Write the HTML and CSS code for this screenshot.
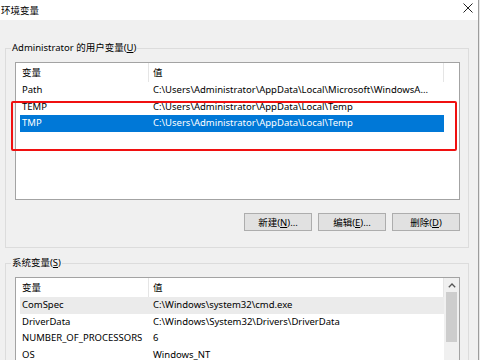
FILE: index.html
```html
<!DOCTYPE html>
<html lang="zh-CN">
    <head>
        <meta charset="UTF-8" />
        <title>环境变量</title>
        <link rel="stylesheet" href="styles.css">
    </head>
    <body>
        <div class="window">
            <header class="titlebar">
                <span class="title">环境变量</span>
                <svg class="close" width="10" height="10" viewBox="0 0 10 10">
                    <path d="M0.5 0.5 L9.5 9.5 M9.5 0.5 L0.5 9.5" stroke="#222" stroke-width="1" fill="none" />
                </svg>
            </header>

            <main class="dialog">
                <fieldset class="group">
                    <legend>Administrator 的用户变量(<u>U</u>)</legend>
                    <div class="list list-user">
                        <div class="list-main">
                            <div class="list-head">
                                <span>变量</span>
                                <span>值</span>
                            </div>
                            <div class="row">
                                <span>Path</span>
                                <span>C:\Users\Administrator\AppData\Local\Microsoft\WindowsA...</span>
                            </div>
                            <div class="row">
                                <span>TEMP</span>
                                <span>C:\Users\Administrator\AppData\Local\Temp</span>
                            </div>
                            <div class="row selected">
                                <span>TMP</span>
                                <span>C:\Users\Administrator\AppData\Local\Temp</span>
                            </div>
                        </div>
                    </div>
                    <div class="buttons">
                        <button>新建(<u>N</u>)...</button>
                        <button>编辑(<u>E</u>)...</button>
                        <button>删除(<u>D</u>)</button>
                    </div>
                </fieldset>

                <fieldset class="group">
                    <legend>系统变量(<u>S</u>)</legend>
                    <div class="list list-sys">
                        <div class="list-main">
                            <div class="list-head">
                                <span>变量</span>
                                <span>值</span>
                            </div>
                            <div class="row hover">
                                <span>ComSpec</span>
                                <span>C:\Windows\system32\cmd.exe</span>
                            </div>
                            <div class="row">
                                <span>DriverData</span>
                                <span>C:\Windows\System32\Drivers\DriverData</span>
                            </div>
                            <div class="row">
                                <span>NUMBER_OF_PROCESSORS</span>
                                <span>6</span>
                            </div>
                            <div class="row">
                                <span>OS</span>
                                <span>Windows_NT</span>
                            </div>
                        </div>
                        <div class="scrollbar">
                            <div class="scroll-up">
                                <svg width="8" height="5" viewBox="0 0 8 5">
                                    <path d="M0.8 4.2 L4 1 L7.2 4.2" stroke="#555" stroke-width="1.3" fill="none" />
                                </svg>
                            </div>
                            <div class="scroll-thumb"></div>
                        </div>
                    </div>
                </fieldset>
            </main>

            <!-- annotation box drawn over the list -->
            <div class="mark"></div>
        </div>
    </body>
</html>
```

FILE: styles.css
```css
* {
  box-sizing: border-box;
}
body {
  margin: 0;
  background: #e6e6e6;
  font-family: 'Noto Sans', 'Noto Sans CJK SC', sans-serif;
  font-size: 9.5px;
  color: #000;
  overflow: hidden;
}
.window {
  position: relative;
  width: 479px;
  height: 360px;
  background: #f0f0f0;
  border-right: 1px solid #9c9c9c;
  overflow: hidden;
}
.titlebar {
  height: 20px;
  background: #fff;
  display: flex;
  align-items: center;
  justify-content: space-between;
  padding: 0 5px 0 1px;
}
.title {
  font-size: 9.5px;
}
.close {
  margin-top: -4px;
}
.dialog {
  padding: 21px 9px 0 5px;
}
.group {
  margin: 0;
  min-width: 0;
  border: 1px solid #dcdcdc;
  padding: 0 8px 16px 9px;
}
.group + .group {
  margin-top: 8px;
}
.group legend {
  padding: 0 1px;
  margin-left: -4px;
  line-height: 14px;
}
.list {
  margin-top: 7px;
  height: 138px;
  background: #fff;
  border: 1px solid #a3a3a3;
  display: flex;
  padding-left: 4px;
}
.list-user {
  padding-right: 15px;
}
.list-sys {
  height: 110px;
}
.list-main {
  flex: 1;
  min-width: 0;
}
.list-head, .row {
  display: grid;
  grid-template-columns: 129px 1fr;
  white-space: nowrap;
}
.list-head {
  height: 19px;
  line-height: 19px;
}
.list-head span {
  border-right: 1px solid #e5e5e5;
}
.list-head span:first-child, .row span:first-child {
  padding-left: 2px;
}
.list-head span:last-child, .row span:last-child {
  padding-left: 4px;
}
.row {
  height: 16.5px;
  line-height: 16.5px;
}
.row span {
  overflow: hidden;
}
.row.selected {
  background: #0078d7;
  color: #fff;
}
.row.hover {
  background: #ebebeb;
}
.buttons {
  display: flex;
  justify-content: flex-end;
  gap: 6px;
  margin-top: 13px;
}
.buttons button {
  width: 68px;
  height: 18px;
  padding: 0;
  background: #e1e1e1;
  border: 1px solid #adadad;
  font-family: inherit;
  font-size: 9.5px;
  color: #000;
}
.scrollbar {
  width: 15px;
  background: #f0f0f0;
  display: flex;
  flex-direction: column;
  align-items: center;
}
.scroll-up {
  height: 14px;
  display: flex;
  align-items: center;
  justify-content: center;
}
.scroll-thumb {
  width: 11px;
  height: 50px;
  background: #cdcdcd;
}
.mark {
  position: absolute;
  left: 11px;
  top: 101px;
  width: 446px;
  height: 50px;
  border: 2px solid #f01010;
  border-radius: 2px;
}
```
